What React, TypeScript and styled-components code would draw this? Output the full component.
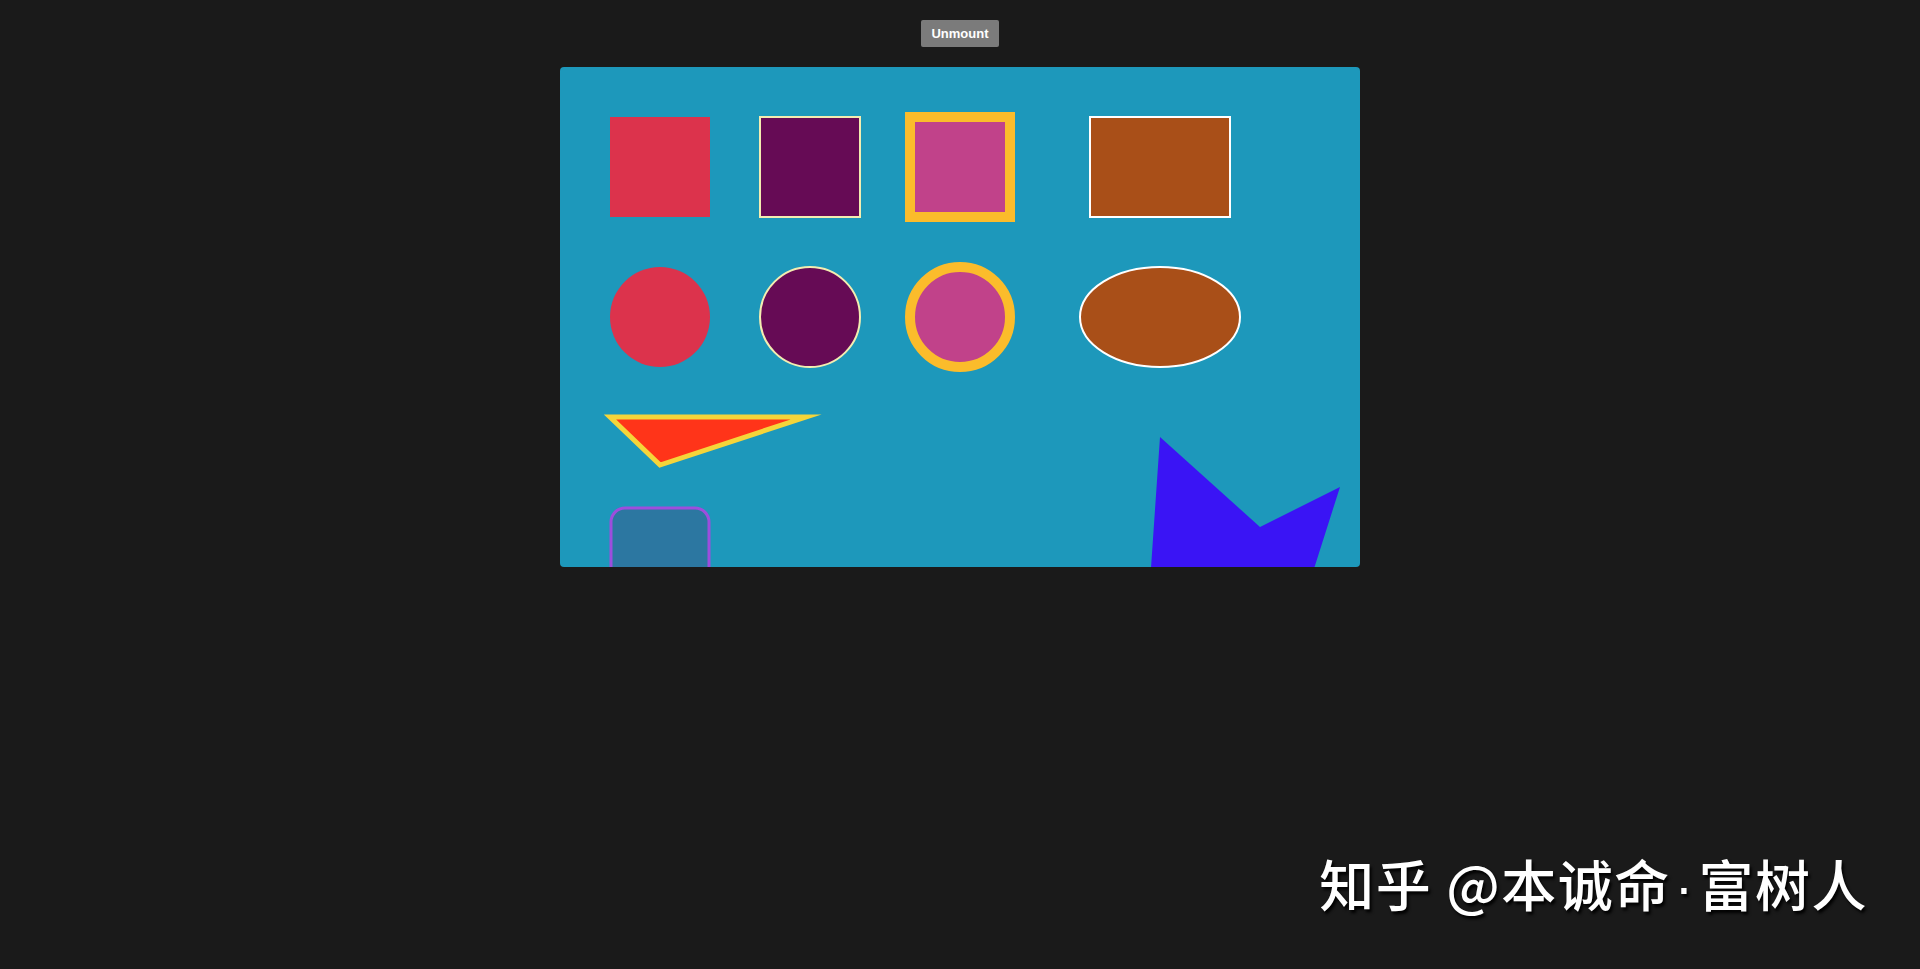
import React from 'react'
import styled, { createGlobalStyle } from 'styled-components'

const GlobalStyle = createGlobalStyle`
  html, body {
    margin: 0;
    padding: 0;
    background: #1a1a1a;
    font-family: "Liberation Sans", Arial, sans-serif;
  }
`

const Page = styled.div`
  position: relative;
  min-height: 969px;
  display: flex;
  flex-direction: column;
  align-items: center;
  padding-top: 20px;
  box-sizing: border-box;
`

const UnmountButton = styled.button`
  width: 78px;
  height: 27px;
  padding: 0;
  border: none;
  border-radius: 2px;
  background: #7b7b7b;
  color: #fff;
  font-family: "Liberation Sans", Arial, sans-serif;
  font-size: 13px;
  font-weight: 700;
  cursor: pointer;
`

const Stage = styled.div`
  margin-top: 20px;
  width: 800px;
  height: 500px;
  border-radius: 4px;
  overflow: hidden;
  background: #1d98bb;

  svg {
    display: block;
  }
`

const Watermark = styled.div`
  position: absolute;
  right: 52px;
  top: 849px;
  color: #fff;
  font-family: "Noto Sans CJK SC", "Noto Sans", sans-serif;
  font-size: 55px;
  font-weight: 500;
  letter-spacing: 1.5px;
  line-height: 1.2;
  white-space: nowrap;
  text-shadow: 2px 3px 3px rgba(0, 0, 0, 0.95);
`

const Dot = styled.span`
  font-family: "Liberation Sans", Arial, sans-serif;
  margin: 0 4px;
`

const RED = '#dc334c'
const PURPLE = '#660b55'
const PINK = '#c1428a'
const BROWN = '#a94f18'
const ORANGE = '#fbbc2b'
const CREAM = '#f3edb1'

const Shapes: React.FC = () => (
  <svg width="800" height="500" viewBox="0 0 800 500">
    {/* squares */}
    <rect x="50" y="50" width="100" height="100" fill={RED} />
    <rect x="200" y="50" width="100" height="100" fill={PURPLE} stroke={CREAM} strokeWidth="2" />
    <rect x="350" y="50" width="100" height="100" fill={PINK} stroke={ORANGE} strokeWidth="10" />
    <rect x="530" y="50" width="140" height="100" fill={BROWN} stroke="#fff" strokeWidth="2" />

    {/* circles */}
    <circle cx="100" cy="250" r="50" fill={RED} />
    <circle cx="250" cy="250" r="50" fill={PURPLE} stroke={CREAM} strokeWidth="2" />
    <circle cx="400" cy="250" r="50" fill={PINK} stroke={ORANGE} strokeWidth="10" />
    <ellipse cx="600" cy="250" rx="80" ry="50" fill={BROWN} stroke="#fff" strokeWidth="2" />

    {/* triangle */}
    <polygon
      points="50,350 246,350 100,398"
      fill="#ff3419"
      stroke="#f5d53a"
      strokeWidth="5"
      strokeLinejoin="miter"
      strokeMiterlimit={10}
    />

    {/* rounded rect */}
    <rect x="51" y="441" width="98" height="90" rx="14" fill="#2c77a1" stroke="#9d4edd" strokeWidth="3" />

    {/* blue star piece */}
    <polygon points="600,370 700,460 780,420 745,530 589,530" fill="#3a14f5" />
  </svg>
)

const App: React.FC = () => (
  <Page>
    <GlobalStyle />
    <UnmountButton>Unmount</UnmountButton>
    <Stage>
      <Shapes />
    </Stage>
    <Watermark>
      知乎 @本诚命<Dot>·</Dot>富树人
    </Watermark>
  </Page>
)

export default App
